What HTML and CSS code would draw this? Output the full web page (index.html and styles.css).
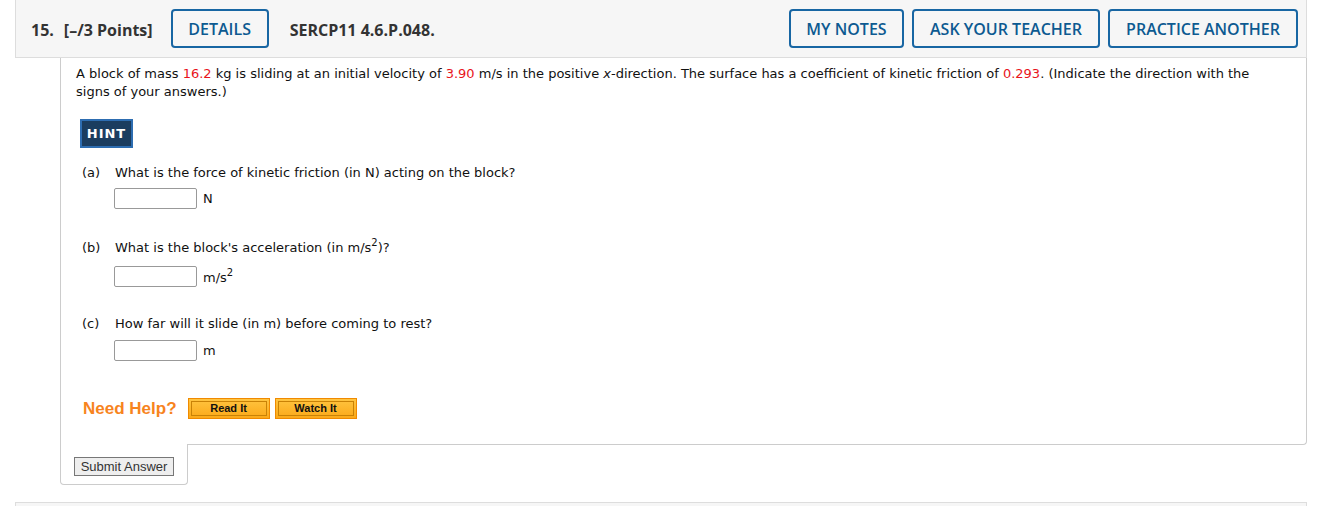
FILE: index.html
```html
<!DOCTYPE html>
<html>
<head>
<meta charset="utf-8">
<link rel="stylesheet" href="styles.css">
</head>
<body>
<div class="page">
  <div class="qhead">
    <div class="qleft">
      <span class="qnum">15.</span>
      <span class="qpts">[–/3 Points]</span>
      <button class="hbtn btn-details">DETAILS</button>
      <span class="qcode">SERCP11 4.6.P.048.</span>
    </div>
    <div class="qright">
      <button class="hbtn btn-notes">MY NOTES</button>
      <button class="hbtn btn-ask">ASK YOUR TEACHER</button>
      <button class="hbtn btn-practice">PRACTICE ANOTHER</button>
    </div>
  </div>
  <div class="qbody">
    <p class="problem">A block of mass <span class="red">16.2</span> kg is sliding at an initial velocity of <span class="red">3.90</span> m/s in the positive <i>x</i>-direction. The surface has a coefficient of kinetic friction of <span class="red">0.293</span>. (Indicate the direction with the signs of your answers.)</p>
    <div class="hint">HINT</div>
    <div class="part part-a">
      <span class="plabel">(a)</span><span class="ptext">What is the force of kinetic friction (in N) acting on the block?</span>
    </div>
    <div class="answer ans-a"><span class="inp"></span><span class="unit">N</span></div>
    <div class="part part-b">
      <span class="plabel">(b)</span><span class="ptext">What is the block's acceleration (in m/s<sup>2</sup>)?</span>
    </div>
    <div class="answer ans-b"><span class="inp"></span><span class="unit">m/s<sup>2</sup></span></div>
    <div class="part part-c">
      <span class="plabel">(c)</span><span class="ptext">How far will it slide (in m) before coming to rest?</span>
    </div>
    <div class="answer ans-c"><span class="inp"></span><span class="unit">m</span></div>
    <div class="help">
      <span class="needhelp">Need Help?</span>
      <span class="obtn"><span class="obtn-in">Read It</span></span>
      <span class="obtn"><span class="obtn-in">Watch It</span></span>
    </div>
  </div>
  <div class="tab"><span class="submit">Submit Answer</span></div>
  <div class="nexthead"></div>
</div>
</body>
</html>
```

FILE: styles.css
```css
html, body { margin: 0; padding: 0; background: #fff; }
.page { margin: 0 11px 0 15px; }
.qhead {
  height: 57px;
  background: #f6f6f6;
  border-left: 1px solid #ddd;
  border-right: 1px solid #ddd;
  border-bottom: 1px solid #ddd;
  display: flex;
  justify-content: space-between;
  align-items: center;
  padding: 0 8px 0 15px;
  font-family: "Open Sans", "Noto Sans", sans-serif;
  color: #333;
}
.qleft, .qright { display: flex; align-items: center; }
.qright { gap: 8px; }
.qnum, .qpts, .qcode { font-weight: 700; font-size: 16px; margin-top: 2px; }
.qnum { margin-right: 10px; }
.qpts { margin-right: 18px; }
.qcode { margin-left: 21px; }
.hbtn {
  height: 39px;
  background: #f6f6f6;
  border: 2px solid #1866a3;
  border-radius: 4px;
  color: #0d5a91;
  font-family: "Open Sans", "Noto Sans", sans-serif;
  font-weight: 600;
  font-size: 16px;
  padding: 1px 0 0;
}
.btn-details { width: 98px; }
.btn-notes { width: 115px; }
.btn-ask { width: 188px; }
.btn-practice { width: 190px; }
.qbody {
  margin-left: 45px;
  border-left: 1px solid #ccc;
  border-right: 1px solid #ccc;
  border-bottom: 1px solid #ccc;
  border-bottom-right-radius: 4px;
  padding: 7px 30px 25px 15px;
  font-family: "DejaVu Sans", Verdana, sans-serif;
  font-size: 13px;
  color: #111;
}
.problem { margin: 0; line-height: 18px; }
.red { color: #e8141b; }
.hint {
  margin: 18px 0 0 4px;
  width: 49px;
  height: 25px;
  line-height: 25px;
  background: #1b3d5f;
  border: 2px solid #2d6db1;
  color: #fff;
  font-weight: 700;
  font-size: 13px;
  letter-spacing: 1px;
  text-align: center;
}
.part { line-height: 18px; margin-left: 6px; display: flex; }
.plabel { width: 33px; }
.part-a { margin-top: 16px; }
.part-b { margin-top: 30px; }
.part-c { margin-top: 28px; }
sup { font-size: 10px; line-height: 0; vertical-align: 6px; }
.answer { display: flex; align-items: center; margin-left: 38px; height: 21px; }
.ans-a { margin-top: 6px; }
.ans-b { margin-top: 9px; }
.ans-c { margin-top: 7px; }
.inp {
  width: 81px;
  height: 19px;
  border: 1px solid #999;
  border-radius: 2px;
  background: #fff;
}
.unit { margin-left: 6px; }
.ans-b .unit { margin-top: 2px; }
.help { display: flex; align-items: center; margin: 37px 0 0 7px; height: 21px; }
.needhelp {
  font-family: "Liberation Sans", Arial, sans-serif;
  font-weight: 700;
  font-size: 17px;
  color: #f7841e;
  margin-right: 11px;
}
.obtn {
  width: 80px;
  height: 19px;
  border: 1px solid #f08a00;
  background: linear-gradient(#ffc440, #fba919);
  display: flex;
  align-items: center;
  justify-content: center;
  margin-right: 5px;
}
.obtn-in {
  width: 74px;
  height: 13px;
  border: 1px solid #c98206;
  font-family: "Liberation Sans", Arial, sans-serif;
  font-weight: 700;
  font-size: 11px;
  line-height: 13px;
  color: #111;
  text-align: center;
}
.tab {
  margin-left: 45px;
  margin-top: -1px;
  width: 113px;
  height: 27px;
  background: #fff;
  border: 1px solid #ccc;
  border-top: none;
  border-radius: 0 0 4px 4px;
  padding: 13px 0 0 13px;
}
.submit {
  display: block;
  width: 98px;
  height: 17px;
  line-height: 17px;
  border: 1px solid #777;
  background: #eee;
  font-family: "Liberation Sans", Arial, sans-serif;
  font-size: 13px;
  color: #333;
  text-align: center;
}
.nexthead {
  margin-top: 17px;
  height: 10px;
  background: #f6f6f6;
  border: 1px solid #ddd;
  border-bottom: none;
}
```
